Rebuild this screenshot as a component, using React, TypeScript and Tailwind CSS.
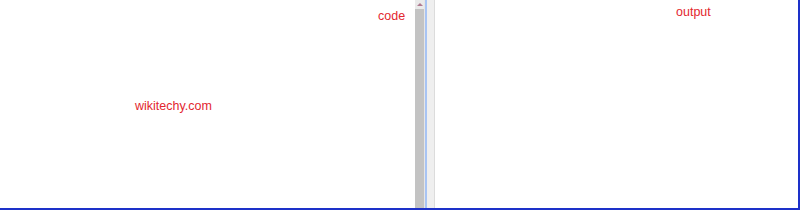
export default function App() {
  return (
    <div className="w-[800px] h-[210px] flex bg-white font-['Liberation_Sans',Arial,sans-serif] text-[12.5px] text-[#e3262e] border-r-2 border-b-2 border-[#1d31c9] box-border overflow-hidden">
      <div className="w-[415px] h-full relative">
        <span className="absolute left-[378px] top-[7px]">code</span>
        <span className="absolute left-[135px] top-[97px]">wikitechy.com</span>
      </div>
      <div className="w-[9px] h-full flex flex-col bg-[#c3c3c3]">
        <div className="h-[9px] bg-[#eaeaea] flex items-center justify-center">
          <div className="w-0 h-0 border-l-[3px] border-r-[3px] border-b-[3px] border-l-transparent border-r-transparent border-b-[#b07a90]" />
        </div>
      </div>
      <div className="w-px h-full bg-[#e6e6e6]" />
      <div className="w-[2px] h-full bg-[#a8c4f4]" />
      <div className="w-[7px] h-full bg-[#efefef]" />
      <div className="w-px h-full bg-[#dcdcdc]" />
      <div className="flex-1 h-full relative">
        <span className="absolute left-[241px] top-[3px]">output</span>
      </div>
    </div>
  );
}
